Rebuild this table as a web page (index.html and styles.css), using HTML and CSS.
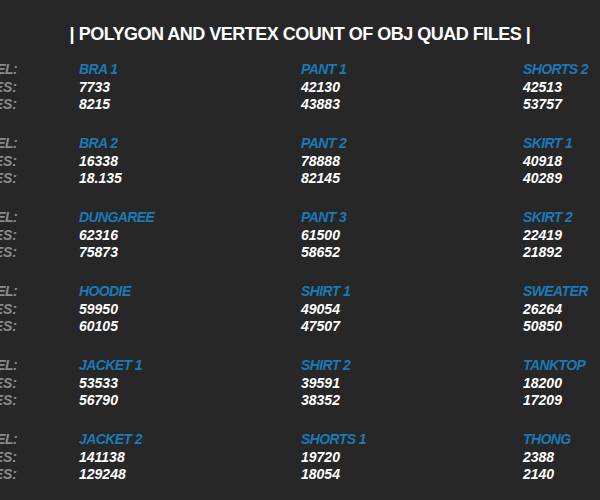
FILE: index.html
```html
<!DOCTYPE html>
<html>
<head>
<meta charset="utf-8">
<link rel="stylesheet" href="styles.css">
</head>
<body>
<h1 class="title">| POLYGON AND VERTEX COUNT OF OBJ QUAD FILES |</h1>
<div class="table">
  <div class="group">
    <div class="labels"><span class="name">MODEL:</span><span>FACES:</span><span>VERTICES:</span></div>
    <div class="item"><span class="name">BRA 1</span><span>7733</span><span>8215</span></div>
    <div class="item"><span class="name">PANT 1</span><span>42130</span><span>43883</span></div>
    <div class="item"><span class="name">SHORTS 2</span><span>42513</span><span>53757</span></div>
  </div>
  <div class="group">
    <div class="labels"><span class="name">MODEL:</span><span>FACES:</span><span>VERTICES:</span></div>
    <div class="item"><span class="name">BRA 2</span><span>16338</span><span>18.135</span></div>
    <div class="item"><span class="name">PANT 2</span><span>78888</span><span>82145</span></div>
    <div class="item"><span class="name">SKIRT 1</span><span>40918</span><span>40289</span></div>
  </div>
  <div class="group">
    <div class="labels"><span class="name">MODEL:</span><span>FACES:</span><span>VERTICES:</span></div>
    <div class="item"><span class="name">DUNGAREE</span><span>62316</span><span>75873</span></div>
    <div class="item"><span class="name">PANT 3</span><span>61500</span><span>58652</span></div>
    <div class="item"><span class="name">SKIRT 2</span><span>22419</span><span>21892</span></div>
  </div>
  <div class="group">
    <div class="labels"><span class="name">MODEL:</span><span>FACES:</span><span>VERTICES:</span></div>
    <div class="item"><span class="name">HOODIE</span><span>59950</span><span>60105</span></div>
    <div class="item"><span class="name">SHIRT 1</span><span>49054</span><span>47507</span></div>
    <div class="item"><span class="name">SWEATER</span><span>26264</span><span>50850</span></div>
  </div>
  <div class="group">
    <div class="labels"><span class="name">MODEL:</span><span>FACES:</span><span>VERTICES:</span></div>
    <div class="item"><span class="name">JACKET 1</span><span>53533</span><span>56790</span></div>
    <div class="item"><span class="name">SHIRT 2</span><span>39591</span><span>38352</span></div>
    <div class="item"><span class="name">TANKTOP</span><span>18200</span><span>17209</span></div>
  </div>
  <div class="group">
    <div class="labels"><span class="name">MODEL:</span><span>FACES:</span><span>VERTICES:</span></div>
    <div class="item"><span class="name">JACKET 2</span><span>141138</span><span>129248</span></div>
    <div class="item"><span class="name">SHORTS 1</span><span>19720</span><span>18054</span></div>
    <div class="item"><span class="name">THONG</span><span>2388</span><span>2140</span></div>
  </div>
</div>
</body>
</html>
```
FILE: styles.css
```css
html, body {
  margin: 0;
  padding: 0;
  background: #272727;
  overflow: hidden;
}
body {
  font-family: "Liberation Sans", Arial, sans-serif;
  width: 600px;
  height: 500px;
}
.title {
  margin: 0;
  padding-top: 23px;
  font-size: 18px;
  line-height: 22px;
  font-weight: bold;
  letter-spacing: -0.5px;
  color: #ffffff;
  text-align: center;
  white-space: nowrap;
}
.table {
  padding-top: 14px;
}
.group {
  display: grid;
  grid-template-columns: 79px 222px 222px 1fr;
  margin-bottom: 20px;
}
.labels, .item {
  display: flex;
  flex-direction: column;
  font-size: 14px;
  font-weight: bold;
  font-style: italic;
  line-height: 17px;
  white-space: nowrap;
}
.labels {
  align-items: flex-end;
  padding-right: 62px;
  color: #8b8b8b;
}
.item {
  color: #ffffff;
}
.name {
  line-height: 20px;
  letter-spacing: -0.6px;
}
.item .name {
  color: #1b79b7;
}
```
